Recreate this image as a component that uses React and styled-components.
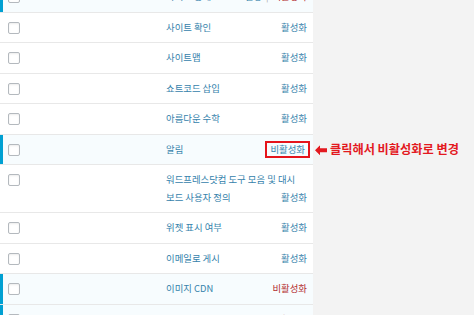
import React from 'react';
import styled, { createGlobalStyle } from 'styled-components';

const GlobalStyle = createGlobalStyle`
  html, body {
    margin: 0;
    padding: 0;
    background: #f3f3f3;
    overflow: hidden;
  }
  body {
    font-family: "Noto Sans CJK KR", "Noto Sans", sans-serif;
  }
`;

const Table = styled.div`
  width: 313px;
  margin-top: -18px;
  background: #fff;
`;

const Row = styled.div`
  position: relative;
  display: flex;
  align-items: flex-start;
  padding: 6px 0;
  border-bottom: 1px solid #e8e8e8;
  line-height: 17.5px;
  font-size: 9.4px;
  background: ${p => (p.$active ? '#f7fcfe' : '#fff')};
  box-shadow: ${p => (p.$active ? 'inset 3px 0 0 #00a0d2' : 'none')};
`;

const CheckCell = styled.div`
  width: 166px;
  flex: none;
  padding-left: 8px;
  box-sizing: border-box;
`;

const Box = styled.span`
  display: block;
  width: 10px;
  height: 10px;
  margin-top: 3px;
  border: 1px solid #b4b9be;
  border-radius: 2px;
  background: #fff;
  box-shadow: inset 0 1px 2px rgba(0, 0, 0, 0.08);
`;

const NameCell = styled.div`
  flex: 1;
  padding-right: 13px;
`;

const Name = styled.a`
  color: #3582ab;
  text-decoration: none;
`;

const Actions = styled.span`
  float: right;
  margin-right: -7px;
  color: #3582ab;
`;

const Link = styled.a`
  color: ${p => (p.$danger ? '#b32d2e' : '#3582ab')};
  text-decoration: none;
  ${p =>
    p.$marked &&
    `
    display: inline-block;
    line-height: 13px;
    padding: 0 3px;
    margin-right: -3px;
    border: 2px solid #e5141b;
  `}
`;

const Sep = styled.span`
  color: #aaa;
  margin: 0 4px;
`;

const Note = styled.div`
  position: absolute;
  left: 315px;
  top: 50%;
  transform: translateY(-45%);
  display: flex;
  align-items: center;
  gap: 3px;
  white-space: nowrap;
  color: #e3191f;
  font-weight: 700;
  font-size: 12.2px;
`;

const modules = [
  { name: '사이트 통계', active: true, settings: true },
  { name: '사이트 확인' },
  { name: '사이트맵' },
  { name: '쇼트코드 삽입' },
  { name: '아름다운 수학' },
  { name: '알림', active: true, marked: true },
  { name: '워드프레스닷컴 도구 모음 및 대시보드 사용자 정의' },
  { name: '위젯 표시 여부' },
  { name: '이메일로 게시' },
  { name: '이미지 CDN', active: true },
  { name: '지연 이미지 로드', active: true },
];

function Arrow() {
  return (
    <svg width="12" height="10" viewBox="0 0 12 10">
      <polygon points="0,5 5,0 5,3 12,3 12,7 5,7 5,10" fill="#e3191f" />
    </svg>
  );
}

export default function App() {
  return (
    <>
      <GlobalStyle />
      <Table>
        {modules.map(m => (
          <Row key={m.name} $active={m.active}>
            <CheckCell>
              <Box />
            </CheckCell>
            <NameCell>
              <Name href="#">{m.name}</Name>
              <Actions>
                {m.settings && (
                  <>
                    <Link href="#">설정</Link>
                    <Sep>|</Sep>
                  </>
                )}
                {m.active ? (
                  <Link href="#" $danger={!m.marked} $marked={m.marked}>비활성화</Link>
                ) : (
                  <Link href="#">활성화</Link>
                )}
              </Actions>
            </NameCell>
            {m.marked && (
              <Note>
                <Arrow />
                클릭해서 비활성화로 변경
              </Note>
            )}
          </Row>
        ))}
      </Table>
    </>
  );
}
